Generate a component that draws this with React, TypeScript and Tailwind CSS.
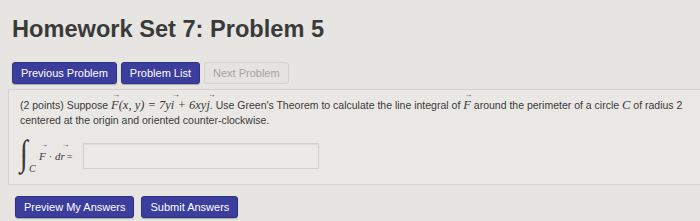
import React from "react";

const Vec: React.FC<{ children: React.ReactNode; className?: string }> = ({ children, className }) => (
  <span className={"relative inline-block " + (className ?? "")}>
    <span className="absolute left-[1px] top-[-7px] text-[8px] not-italic leading-none">&rarr;</span>
    {children}
  </span>
);

const NavButton: React.FC<{ label: string; disabled?: boolean }> = ({ label, disabled }) => (
  <button
    type="button"
    className={
      disabled
        ? "h-[22px] px-[8px] rounded-[3px] border border-[#d2d1cd] bg-[#e4e3df] text-[11px] text-[#a3a3a3]"
        : "h-[22px] px-[8px] rounded-[3px] border border-[#2f3183] bg-[#3b3e9d] text-[11px] text-white shadow-[0_1px_1px_rgba(0,0,0,0.25)]"
    }
  >
    {label}
  </button>
);

export default function App() {
  return (
    <div className="w-[700px] h-[221px] overflow-hidden bg-[#e6e5e1] font-['Liberation_Sans',Arial,sans-serif] text-[#333]">
      <h1 className="ml-[12px] pt-[15px] text-[23.6px] leading-[28px] font-bold text-[#3a3a3a]">
        Homework Set 7: Problem 5
      </h1>

      <div className="ml-[12px] mt-[19px] flex gap-[4px]">
        <NavButton label="Previous Problem" />
        <NavButton label="Problem List" />
        <NavButton label="Next Problem" disabled />
      </div>

      <div className="ml-[8px] mt-[5px] h-[96px] border border-r-0 border-[#d3d2ce] bg-[#e9e8e4] pl-[11px] pt-[8px]">
        <p className="text-[10.5px] leading-[15px] text-[#3a3a3a]">
          (2 points) Suppose{" "}
          <span className="font-['Liberation_Serif',serif] text-[12.5px] italic">
            <Vec>F</Vec>(x, y) = 7y<Vec>i</Vec> + 6xy<Vec>j</Vec>
          </span>
          . Use Green&apos;s Theorem to calculate the line integral of{" "}
          <span className="font-['Liberation_Serif',serif] text-[12.5px] italic">
            <Vec>F</Vec>
          </span>{" "}
          around the perimeter of a circle{" "}
          <span className="font-['Liberation_Serif',serif] text-[12.5px] italic">C</span> of radius 2
          <br />
          centered at the origin and oriented counter-clockwise.
        </p>

        <div className="mt-[10px] flex items-center font-['Liberation_Serif',serif] text-[#3a3a3a]">
          <span className="relative w-[19px] h-[36px]">
            <span className="absolute left-0 top-[-3px] text-[36px] leading-none scale-x-[0.8] origin-left">&#8747;</span>
            <span className="absolute left-[9px] top-[23px] text-[10px] italic">C</span>
          </span>
          <span className="text-[11px] italic">
            <Vec>F</Vec>
          </span>
          <span className="mx-[3px] text-[10px]">&middot;</span>
          <span className="text-[11px] italic">
            d<Vec>r</Vec>
          </span>
          <span className="ml-[2px] text-[10px]">=</span>
          <div className="ml-[10px] h-[26px] w-[236px] border border-[#d0cfcb] bg-[#ebeae7] shadow-[inset_0_1px_1px_rgba(0,0,0,0.06)]" />
        </div>
      </div>

      <div className="ml-[15px] mt-[11px] flex gap-[7px]">
        <NavButton label="Preview My Answers" />
        <NavButton label="Submit Answers" />
      </div>
    </div>
  );
}
